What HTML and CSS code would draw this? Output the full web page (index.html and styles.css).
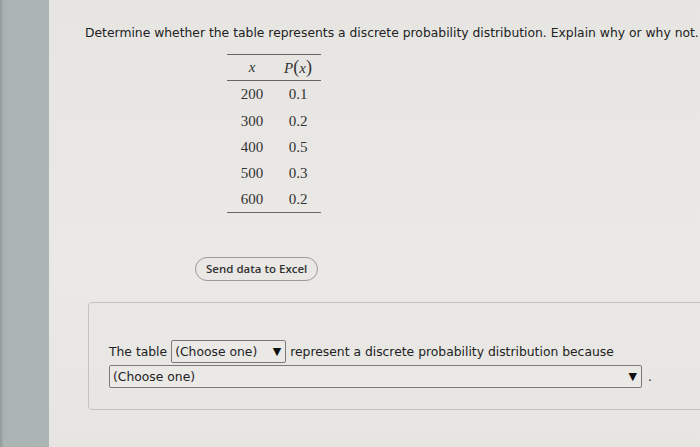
FILE: index.html
```html
<!DOCTYPE html>
<html>
<head>
<meta charset="utf-8">
<link rel="stylesheet" href="styles.css">
</head>
<body>
<div class="page">
  <div class="sidebar"></div>
  <div class="main">
    <p class="question">Determine whether the table represents a discrete probability distribution. Explain why or why not.</p>
    <table class="dist">
      <thead>
        <tr><th><i>x</i></th><th><i>P</i><span class="paren">(</span><i>x</i><span class="paren">)</span></th></tr>
      </thead>
      <tbody>
        <tr><td>200</td><td>0.1</td></tr>
        <tr><td>300</td><td>0.2</td></tr>
        <tr><td>400</td><td>0.5</td></tr>
        <tr><td>500</td><td>0.3</td></tr>
        <tr><td>600</td><td>0.2</td></tr>
      </tbody>
    </table>
    <div class="btn-row"><span class="excel-btn">Send data to Excel</span></div>
    <div class="answer-box">
      <div class="line1">
        <span>The table</span>
        <span class="select small"><span class="sel-text">(Choose one)</span><span class="arrow">&#9660;</span></span>
        <span>represent a discrete probability distribution because</span>
      </div>
      <div class="line2">
        <span class="select wide"><span class="sel-text">(Choose one)</span><span class="arrow">&#9660;</span></span>
        <span class="dot">.</span>
      </div>
    </div>
  </div>
</div>
</body>
</html>
```
FILE: styles.css
```css
html, body {
  margin: 0;
  padding: 0;
}
body {
  width: 700px;
  height: 447px;
  overflow: hidden;
  font-family: "DejaVu Sans", Verdana, sans-serif;
  color: #222;
}
.page {
  display: flex;
  height: 447px;
}
.sidebar {
  width: 49px;
  flex: none;
  background: linear-gradient(to right, #8f9a99 0, #a9b4b3 4px, #aab5b4 100%);
}
.main {
  flex: 1;
  background: linear-gradient(to bottom, #e6e5e1 0, #eae9e6 60%, #e6e5e2 100%);
  padding-left: 36px;
  overflow: hidden;
}
.question {
  margin: 26px 0 0 0;
  font-size: 12.35px;
  line-height: 15px;
  white-space: nowrap;
}
.dist {
  margin: 13px 0 0 142px;
  border-collapse: collapse;
  font-family: "Liberation Serif", "Times New Roman", serif;
  font-size: 15px;
  color: #333;
  border-top: 1px solid #666;
  border-bottom: 1px solid #666;
}
.dist th {
  font-weight: normal;
  height: 25px;
  border-bottom: 1px solid #666;
  padding: 0;
}
.dist th:first-child, .dist td:first-child {
  width: 46px;
  padding-left: 2px;
  text-align: center;
}
.dist th:last-child, .dist td:last-child {
  width: 46px;
  text-align: center;
}
.dist .paren {
  font-size: 18px;
}
.dist td {
  height: 26px;
  padding: 0;
}
.dist tbody tr:first-child td {
  height: 27px;
}
.btn-row {
  margin: 44px 0 0 110px;
}
.excel-btn {
  display: inline-block;
  font-family: "Open Sans", sans-serif;
  font-weight: 600;
  font-size: 11.5px;
  color: #333;
  padding: 3px 10px 4px 10px;
  border: 1px solid #9a9a98;
  border-radius: 12px;
  background: #e9e8e5;
  line-height: 15px;
}
.answer-box {
  margin: 21px -20px 0 3px;
  height: 108px;
  border: 1px solid #c4c3bf;
  border-radius: 4px;
  box-sizing: border-box;
  padding: 37px 0 0 20px;
  font-size: 12.35px;
}
.line1 {
  display: flex;
  align-items: center;
  gap: 4px;
  height: 23px;
}
.line2 {
  display: flex;
  align-items: center;
  margin-top: 2px;
  height: 23px;
}
.select {
  display: inline-flex;
  align-items: center;
  justify-content: space-between;
  box-sizing: border-box;
  height: 23px;
  border: 1px solid #7a7a78;
  border-radius: 2px;
  padding: 0 4px 0 3px;
  background: #eae9e6;
}
.select.small {
  width: 115px;
}
.select.wide {
  width: 533px;
}
.arrow {
  font-size: 11px;
  color: #111;
}
.dot {
  margin-left: 6px;
}
```
